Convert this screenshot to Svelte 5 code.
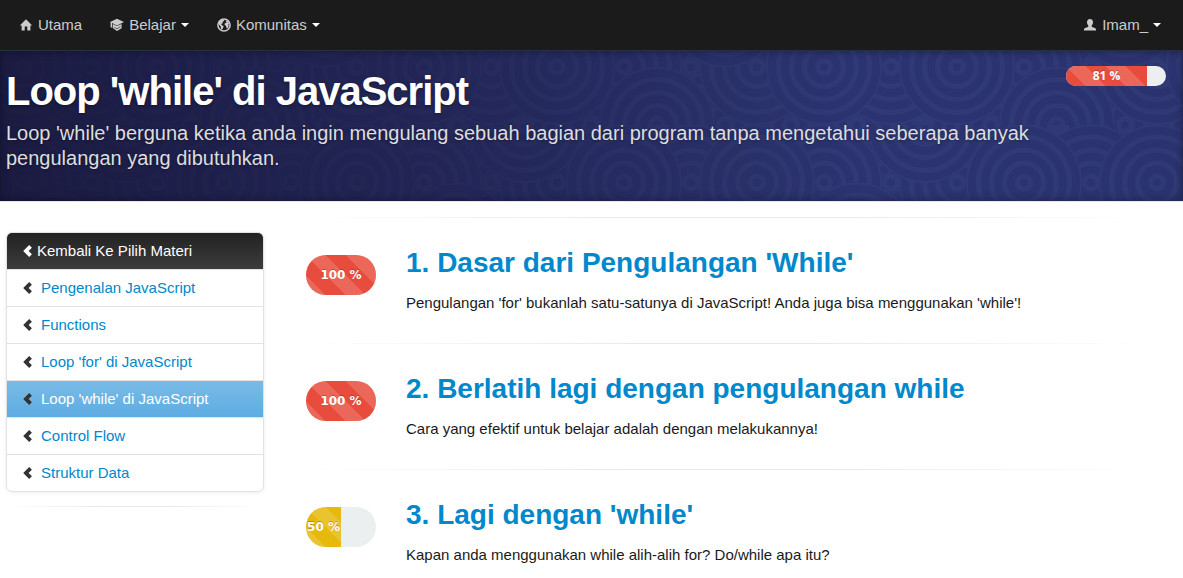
<script>
  const materials = [
    { title: 'Pengenalan JavaScript' },
    { title: 'Functions' },
    { title: "Loop 'for' di JavaScript" },
    { title: "Loop 'while' di JavaScript", active: true },
    { title: 'Control Flow' },
    { title: 'Struktur Data' }
  ];

  const lessons = [
    { title: "1. Dasar dari Pengulangan 'While'", text: "Pengulangan 'for' bukanlah satu-satunya di JavaScript! Anda juga bisa menggunakan 'while'!", done: 100 },
    { title: '2. Berlatih lagi dengan pengulangan while', text: 'Cara yang efektif untuk belajar adalah dengan melakukannya!', done: 100 },
    { title: "3. Lagi dengan 'while'", text: 'Kapan anda menggunakan while alih-alih for? Do/while apa itu?', done: 50 }
  ];

  // Overlapping ring rosettes on a triangular grid; each cell repeats at half-tile shifts.
  const shifts = [];
  for (let i = -2; i <= 3; i++) {
    for (let j = -2; j <= 3; j++) {
      if ((i + j) % 2 === 0) shifts.push([i * 200, j * 115.5]);
    }
  }
  const layer = (x, y, half = '') => shifts.map(([dx, dy]) => ({ x: x + dx, y: y + dy, half }));
  const rosettes = [
    ...layer(291, 16), ...layer(191, 74), ...layer(325, 74), ...layer(57, 74), ...layer(391, 74),
    ...layer(91, 16), ...layer(357, 16), ...layer(224, 16),
    ...layer(24, 16), ...layer(157, 16),
    ...layer(125, 74, 'lower'), ...layer(257, 74, 'upper')
  ];
</script>

{#snippet chevron()}
  <svg class="chevron" viewBox="0 0 14 14" aria-hidden="true"><path d="M8.200 1 10.900 3.700 7.600 7 10.900 10.300 8.200 13 2.200 7z" fill="currentColor" /></svg>
{/snippet}

<nav class="navbar">
  <ul>
    <li>
      <a href="#utama">
        <svg viewBox="0 0 14 14" aria-hidden="true"><path d="M7 1.200 13.200 7.500h-1.800V12.500H8.300V8.600H5.700v3.900H2.600V7.500H.8z" fill="currentColor" /></svg>
        Utama
      </a>
    </li>
    <li>
      <button type="button">
        <svg viewBox="0 0 14 14" aria-hidden="true"><path d="M7 .8 14 4 7 7.400 2 5v4.500H.6V4.400L0 4zM2.700 6 7 8l4.600-2v4.200L7 12.900 2.700 10z" fill="currentColor" /><path d="M4.200 9.200 7 10.800 10.500 8.600" fill="none" stroke="#1b1b1b" stroke-width=".6" /></svg>
        Belajar <span class="caret"></span>
      </button>
    </li>
    <li>
      <button type="button">
        <svg viewBox="0 0 14 14" aria-hidden="true"><circle cx="7" cy="7" r="6.100" fill="none" stroke="currentColor" stroke-width="1.500" /><path d="M2 4.200 4.200 2l2.500-.3.6 1.200-1.500.7-.2 1.600-1.500.8.8 1.300 1.700.8-.4 1.700-1.400 2.200-.9-1.600-.1-2-1.800-1.600zM8.600 2.400l2.300.8 1.300 2.300-.9.4.5 1.600-1 2.600-1.200.5-.5-2.500-1.600-1.300.3-1.600 1.800-.5z" fill="currentColor" /></svg>
        Komunitas <span class="caret"></span>
      </button>
    </li>
  </ul>
  <button type="button">
    <svg viewBox="0 0 14 14" aria-hidden="true"><path d="M7 1c2 0 3 1.300 3 3.200 0 1.500-.6 2.500-1.300 3.200v1.400c1 .6 4.300 1 4.300 2.700v1H1v-1c0-1.700 3.300-2.100 4.300-2.700V7.400C4.600 6.700 4 5.700 4 4.200 4 2.300 5 1 7 1z" fill="currentColor" /></svg>
    Imam_ <span class="caret"></span>
  </button>
</nav>

<header class="hero">
  <svg class="pattern" aria-hidden="true">
    <defs>
      <g id="rosette">
        <circle r="58" fill="#000" />
        <circle r="4" fill="#fff" />
        <g fill="none" stroke="#fff" stroke-width="8"><circle r="13" /><circle r="26" /><circle r="39" /><circle r="52" /></g>
      </g>
      <clipPath id="lower"><rect x="-60" y="0" width="120" height="60" /></clipPath>
      <clipPath id="upper"><rect x="-60" y="-60" width="120" height="60" /></clipPath>
      <pattern id="tile" width="400" height="231" patternUnits="userSpaceOnUse">
        {#each rosettes as r}
          <g transform="translate({r.x} {r.y})"><use href="#rosette" clip-path={r.half ? `url(#${r.half})` : undefined} /></g>
        {/each}
      </pattern>
      <mask id="rings"><rect width="100%" height="100%" fill="url(#tile)" /></mask>
    </defs>
    <rect width="100%" height="100%" fill="#0c1050" fill-opacity=".13" mask="url(#rings)" />
  </svg>
  <div class="intro">
    <h1>Loop 'while' di JavaScript</h1>
    <p>Loop 'while' berguna ketika anda ingin mengulang sebuah bagian dari program tanpa mengetahui seberapa banyak pengulangan yang dibutuhkan.</p>
  </div>
  <div class="progress small" role="progressbar" aria-valuenow="81" aria-label="Kemajuan materi">
    <div class="bar" style="width: 81%">81 %</div>
  </div>
</header>

<div class="page">
  <aside>
    <ul class="menu">
      <li class="back"><a href="#materi">{@render chevron()}Kembali Ke Pilih Materi</a></li>
      {#each materials as m}
        <li class:active={m.active}><a href="#materi">{@render chevron()}<span>{m.title}</span></a></li>
      {/each}
    </ul>
    <hr />
  </aside>
  <main>
    {#each lessons as l}
      <hr />
      <article>
        <div class="progress" role="progressbar" aria-valuenow={l.done} aria-label={l.title}>
          <div class="bar" class:half={l.done < 100} style="width: {l.done}%">{l.done} %</div>
        </div>
        <div>
          <h2><a href="#pelajaran">{l.title}</a></h2>
          <p>{l.text}</p>
        </div>
      </article>
    {/each}
  </main>
</div>

<style>
  :global(body) { margin: 0; overflow-x: hidden; background: #fff; color: #1a1a1a; font: 15px/20px "Liberation Sans", Arial, sans-serif; }
  ul { list-style: none; margin: 0; padding: 0; }
  a { color: #0088cc; text-decoration: none; }
  h1, h2, p { margin: 0; }

  .navbar { display: flex; justify-content: space-between; align-items: center; height: 50px; padding: 0 8px 0 5px; background: #1b1b1b; border-bottom: 1px solid #22323f; }
  .navbar ul { display: flex; }
  .navbar a, .navbar button { display: flex; align-items: center; padding: 15px 14px; border: 0; background: none; color: #ccc; font: inherit; }
  .navbar svg { width: 14px; height: 14px; margin-right: 5px; }
  .caret { margin-left: 5px; border: 4px solid transparent; border-top-color: #fff; border-bottom: 0; }

  .hero { position: relative; display: flex; justify-content: space-between; align-items: flex-start; gap: 20px; min-height: 115px; padding: 15px 17px 20px 6px; background: linear-gradient(80deg, #1c1c40, #262a5a 40%, #303a76 72%, #2f3974); box-shadow: inset 0 3px 7px rgba(0, 0, 0, .2), inset 0 -3px 7px rgba(0, 0, 0, .2); border-bottom: 1px solid #e4e4ec; color: #ddd; }
  .pattern { position: absolute; inset: 0; width: 100%; height: 100%; }
  .intro { position: relative; flex: 1; }
  h1 { color: #fff; font-size: 40px; line-height: 50px; letter-spacing: -1px; text-shadow: 0 1px 3px rgba(0, 0, 0, .4); }
  .intro p { margin-top: 5px; font-size: 20px; line-height: 25px; text-shadow: 0 1px 3px rgba(0, 0, 0, .3); }

  .progress { flex: none; width: 70px; height: 40px; border-radius: 20px; overflow: hidden; background: #ebeff0; font: bold 12px/40px "DejaVu Sans", Verdana, sans-serif; }
  .bar { height: 100%; overflow: hidden; white-space: nowrap; text-align: center; color: #fff; background: #e84c3d linear-gradient(45deg, rgba(255, 255, 255, .15) 25%, transparent 25%, transparent 50%, rgba(255, 255, 255, .15) 50%, rgba(255, 255, 255, .15) 75%, transparent 75%) 0 0 / 40px 40px; text-shadow: 0 -1px 0 rgba(0, 0, 0, .25); }
  .half { background-color: #e6b90c; }
  .small { position: relative; width: 100px; height: 20px; font: bold 12px/20px "Open Sans", sans-serif; }

  .page { display: flex; gap: 42px; padding: 0 37px 0 6px; }
  aside { flex: none; width: 258px; padding-top: 30px; }
  .menu { border: 1px solid #e2e2e2; border-radius: 6px; overflow: hidden; box-shadow: 0 1px 4px rgba(0, 0, 0, .065); }
  .menu li + li { border-top: 1px solid #e2e2e2; }
  .menu a { display: flex; align-items: center; padding: 8px 14px; }
  .menu span { margin-left: 4px; }
  .chevron { width: 14px; height: 14px; margin-right: 2px; color: #333; }
  .back { background: linear-gradient(#222, #3c3c3c); }
  .back a, .back .chevron, .active a { color: #fff; }
  .active { background: linear-gradient(#7abbe6, #5dace2); }

  hr { height: 1px; margin: 0; border: 0; background: linear-gradient(90deg, transparent, #e8e8e8 40%, #e8e8e8 60%, transparent); }
  aside hr { margin-top: 14px; }
  main { flex: 1; min-width: 0; padding-top: 15px; }
  article { display: flex; align-items: flex-start; gap: 30px; min-height: 88px; padding: 37px 0 0; }
  h2 { margin-top: -12px; font-size: 28px; line-height: 40px; }
  article p { margin-top: 10px; }
</style>
